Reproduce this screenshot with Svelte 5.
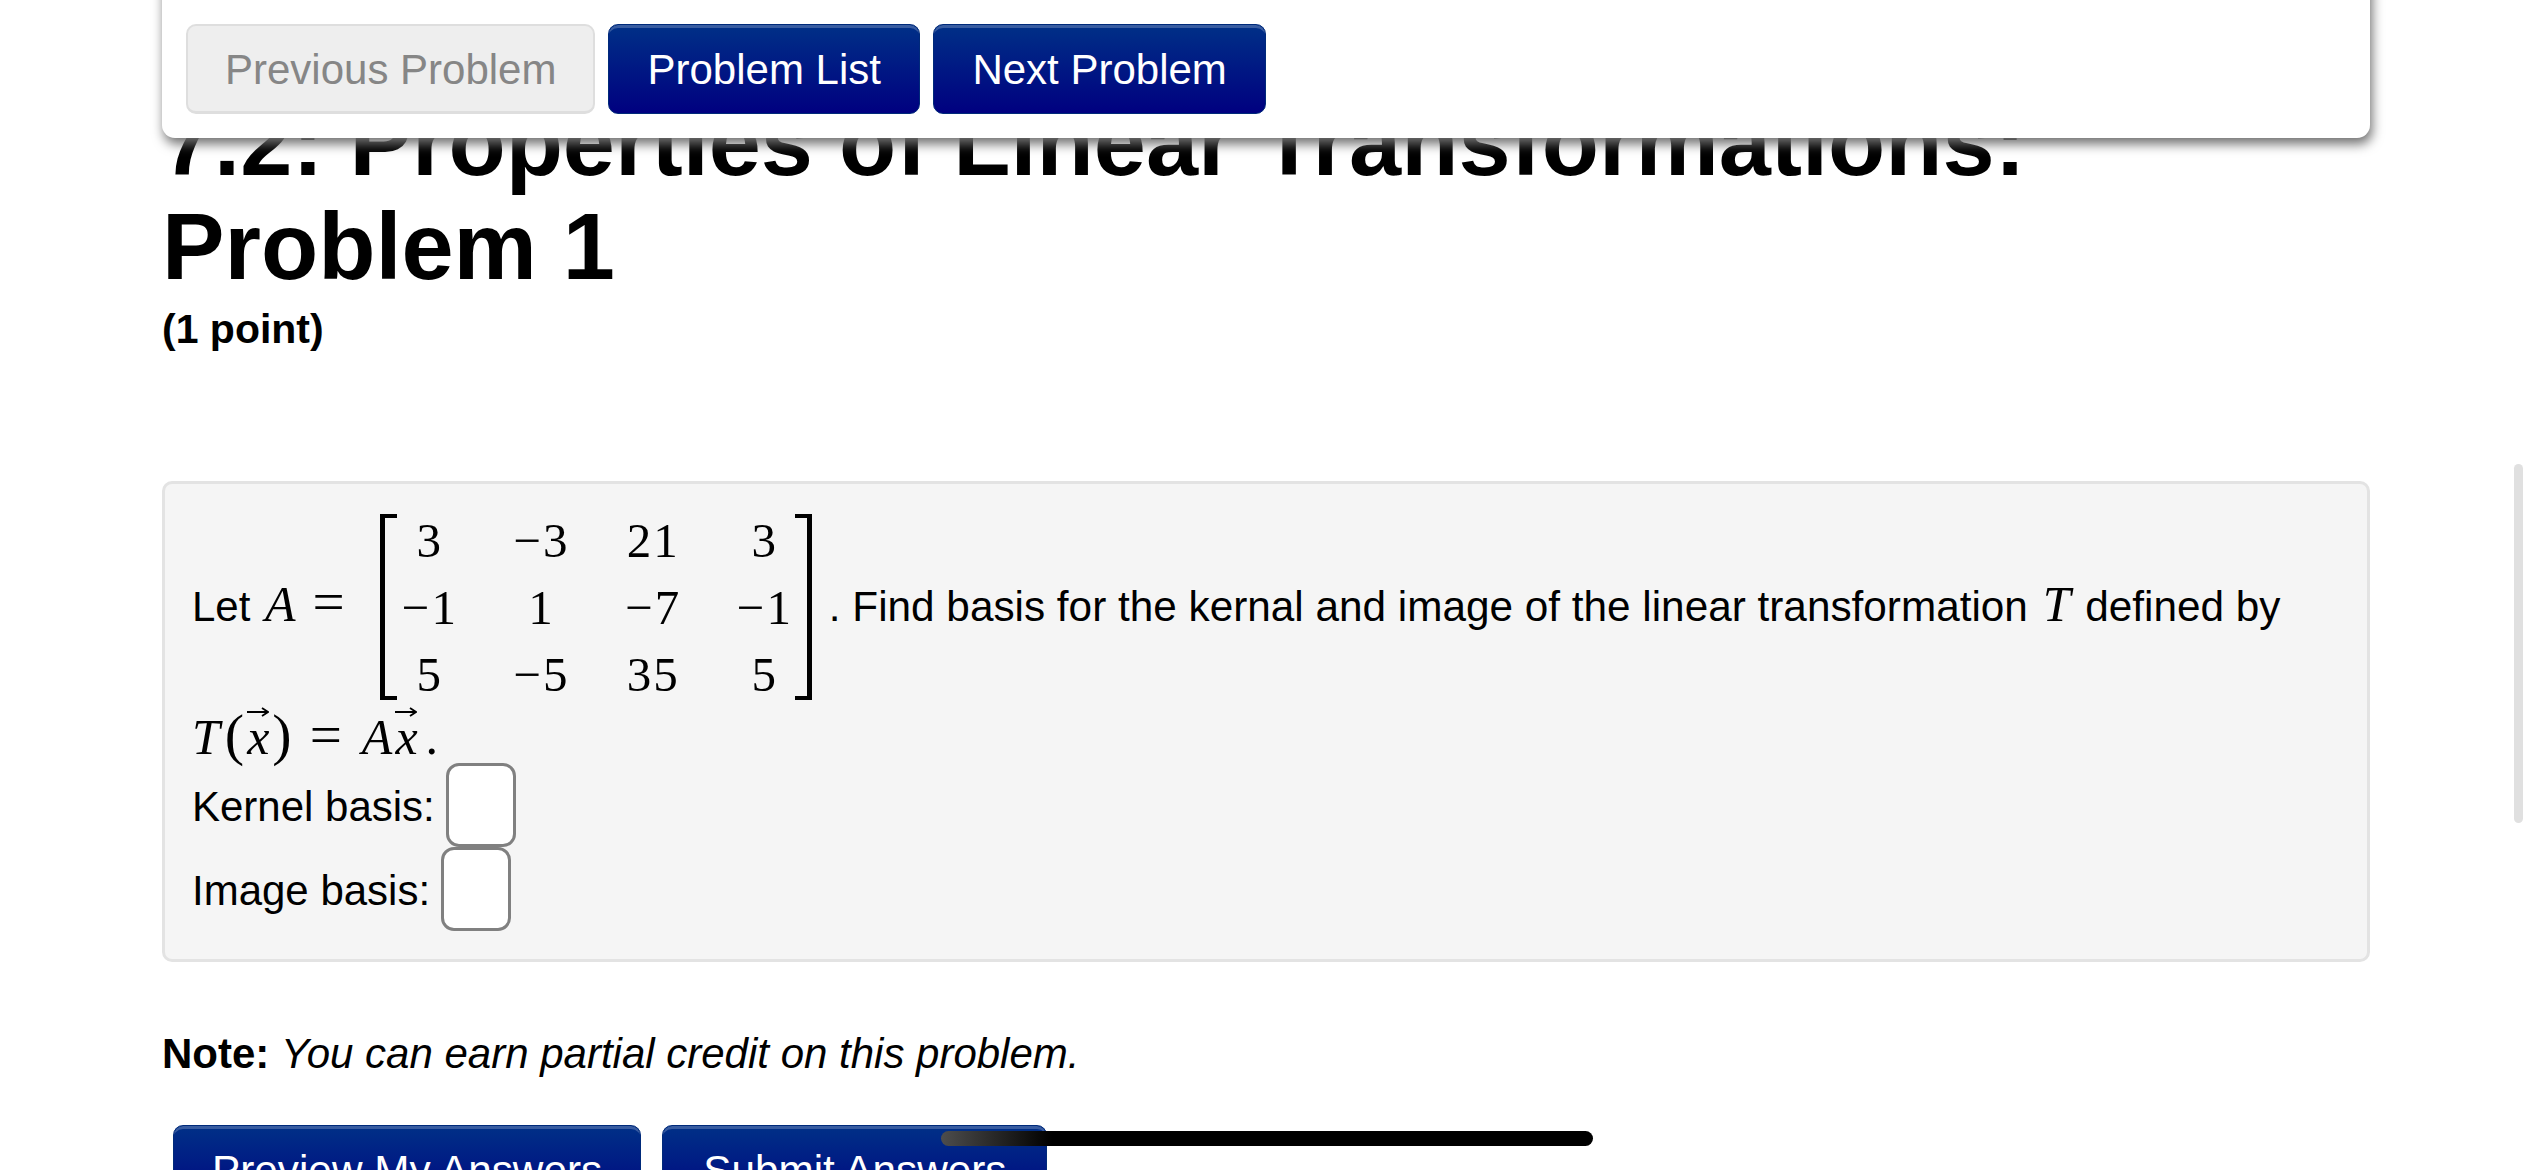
<script>
	const matrix = [
		['3', '−3', '21', '3'],
		['−1', '1', '−7', '−1'],
		['5', '−5', '35', '5']
	];
</script>

<div class="page">
	<nav class="topbar">
		<button class="btn disabled" disabled>Previous Problem</button>
		<button class="btn">Problem List</button>
		<button class="btn">Next Problem</button>
	</nav>

	<main>
		<h1>7.2: Properties of Linear Transformations:<br />Problem 1</h1>
		<div class="points">(1 point)</div>

		<section class="well">
			<div class="first-line">
				<span class="lead">Let <i class="math a">A</i><span class="math eq">=</span></span>
				<div class="matrix">
					<span class="bracket left"></span>
					<div class="cells">
						{#each matrix as row}
							{#each row as cell}
								<span>{cell}</span>
							{/each}
						{/each}
					</div>
					<span class="bracket right"></span>
				</div>
				<span class="rest">. Find basis for the kernal and image of the linear transformation <i class="math inline-t">T</i> defined by</span>
			</div>

			<div class="equation">
				<i class="math t">T</i><span class="math paren">(</span><span class="vec"><i class="math">x</i><svg viewBox="0 0 22 10" width="22" height="10"><path d="M0 5h20M15 1l6 4-6 4" fill="none" stroke="#000" stroke-width="1.8" /></svg></span><span class="math paren">)</span><span class="math eq eq2">=</span><i class="math a2">A</i><span class="vec"><i class="math">x</i><svg viewBox="0 0 22 10" width="22" height="10"><path d="M0 5h20M15 1l6 4-6 4" fill="none" stroke="#000" stroke-width="1.8" /></svg></span><span class="math dot">.</span>
			</div>

			<label class="answer"><span>Kernel basis:</span><input type="text" /></label>
			<label class="answer"><span>Image basis:</span><input type="text" /></label>
		</section>

		<p class="note"><b>Note:</b> <em>You can earn partial credit on this problem.</em></p>

		<div class="actions">
			<button class="btn">Preview My Answers</button>
			<button class="btn">Submit Answers</button>
		</div>
	</main>

	<div class="scrollbar"></div>
	<div class="home-indicator"></div>
</div>

<style>
	:global(body) {
		margin: 0;
		background: #fff;
	}

	.page {
		position: relative;
		width: 2532px;
		height: 1170px;
		overflow: hidden;
		font-family: 'Liberation Sans', Arial, sans-serif;
		font-size: 42px;
		line-height: 58px;
		color: #000;
		background: #fff;
	}

	.topbar {
		position: absolute;
		left: 162px;
		top: -20px;
		width: 2208px;
		height: 158px;
		box-sizing: border-box;
		padding: 44px 0 0 24px;
		display: flex;
		gap: 12.5px;
		align-items: flex-start;
		background: #fff;
		border-radius: 0 0 13px 13px;
		box-shadow: 2px 6px 12px #6f6f6f;
	}

	.btn {
		height: 90px;
		padding: 2px 38.5px 0;
		box-sizing: border-box;
		font: inherit;
		color: #fff;
		white-space: nowrap;
		border: 1px solid #002a7a;
		border-radius: 10px;
		background: linear-gradient(#003087, #000080);
		box-shadow: inset 0 4px 0 -1px rgba(255, 255, 255, 0.22);
	}

	.btn.disabled {
		padding: 2px 37px 0;
		color: #868686;
		border: 2px solid #dedede;
		border-bottom-width: 3px;
		background: #eeeeee;
		box-shadow: none;
	}

	main {
		padding-left: 162px;
		width: 2208px;
	}

	h1 {
		margin: 91px 0 0;
		font-size: 93.7px;
		line-height: 104px;
		font-weight: 700;
	}

	.points {
		margin-top: 1px;
		font-size: 41px;
		font-weight: 700;
	}

	.well {
		margin-top: 123px;
		box-sizing: border-box;
		height: 481px;
		padding: 30px 27px 0;
		background: #f5f5f5;
		border: 3px solid #e3e3e3;
		border-radius: 10px;
	}

	.first-line {
		display: flex;
		align-items: center;
		height: 186px;
		white-space: nowrap;
	}

	.lead {
		margin-bottom: 6px;
	}

	.math {
		font-family: 'Liberation Serif', 'Times New Roman', serif;
		font-size: 50px;
	}

	.inline-t {
		margin: 0 3px;
		line-height: 40px;
	}

	.eq {
		font-size: 57px;
		margin-left: 17px;
	}

	.eq2 {
		margin-left: 18px;
	}

	.lead .a {
		margin-left: 3px;
	}

	.matrix {
		display: flex;
		margin-left: 35px;
		height: 186px;
		font-family: 'Liberation Serif', 'Times New Roman', serif;
		font-size: 49px;
		line-height: 67px;
	}

	.bracket {
		width: 17px;
		box-sizing: border-box;
		border: solid #000;
		border-width: 4px 0;
	}

	.bracket.left {
		border-left-width: 5px;
	}

	.bracket.right {
		border-right-width: 5px;
	}

	.cells {
		display: grid;
		grid-template-columns: repeat(4, 56px);
		grid-auto-rows: 67px;
		column-gap: 55.7px;
		margin: -7px 2px -8px 5px;
		letter-spacing: 2px;
		text-align: center;
	}

	.rest {
		margin-left: 17px;
		font-size: 42.3px;
	}

	.equation {
		margin-top: 6px;
		height: 58px;
		white-space: nowrap;
	}

	.t {
		margin-right: 5px;
	}

	.paren {
		font-size: 58px;
	}

	.a2 {
		margin-left: 20px;
	}

	.dot {
		margin-left: 5px;
	}

	.vec {
		position: relative;
		display: inline-block;
		padding: 0 3px;
	}

	.vec svg {
		position: absolute;
		left: 3px;
		top: -1px;
	}

	.answer {
		display: flex;
		align-items: center;
		gap: 11px;
		height: 84px;
	}

	.answer:first-of-type {
		margin-top: -1px;
	}

	.answer span {
		margin-top: 4px;
	}

	input {
		width: 70px;
		height: 84px;
		margin: 0;
		box-sizing: border-box;
		background: #fff;
		border: 3px solid #808080;
		border-radius: 13px;
	}

	.note {
		margin: 63px 0 0;
	}

	.actions {
		display: flex;
		gap: 21px;
		margin: 42px 0 0 11px;
	}

	.actions .btn {
		padding: 2px 38px 0;
		font-size: 42.3px;
	}

	.actions .btn:last-child {
		padding: 2px 40px 0;
	}

	.scrollbar {
		position: absolute;
		left: 2514px;
		top: 464px;
		width: 9px;
		height: 359px;
		border-radius: 5px;
		background: #e0e0e0;
	}

	.home-indicator {
		position: absolute;
		left: 941px;
		top: 1131px;
		width: 652px;
		height: 15px;
		border-radius: 8px;
		background: linear-gradient(90deg, #4d4d4d, #000 17%);
	}
</style>
